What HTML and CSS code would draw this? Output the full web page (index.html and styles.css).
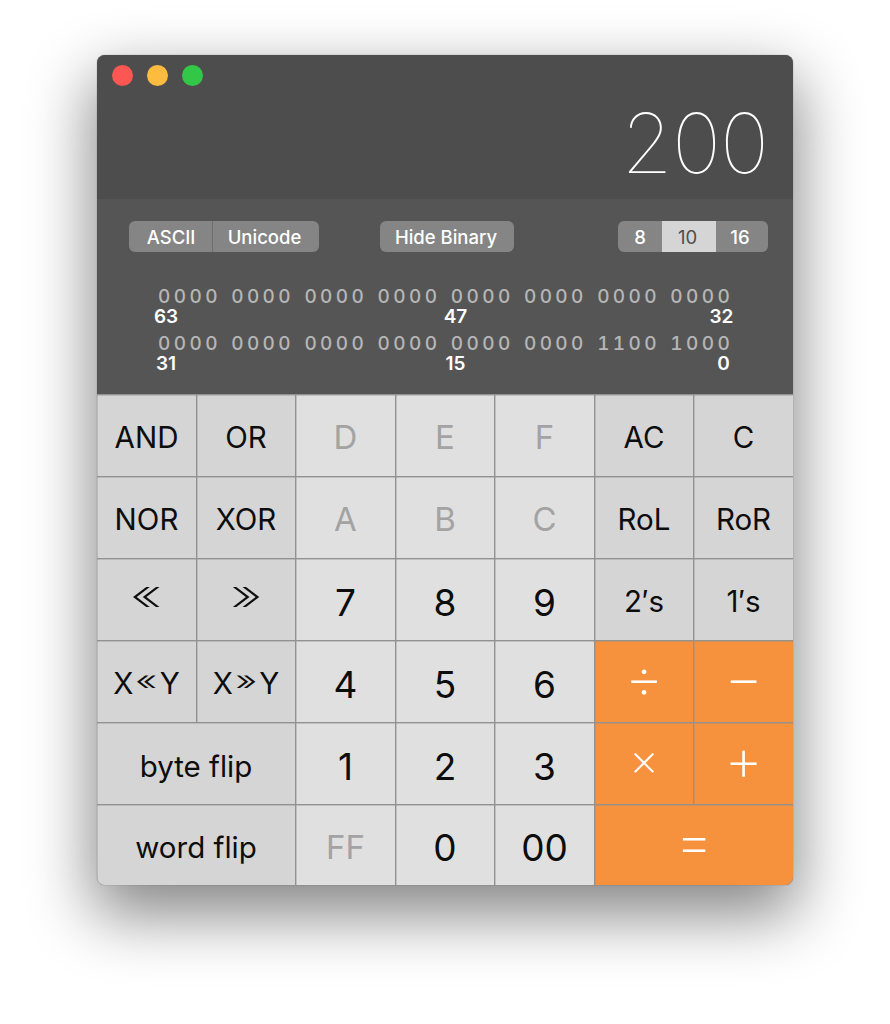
FILE: index.html
```html
<!DOCTYPE html>
<html lang="en">
<head>
<meta charset="utf-8">
<title>Calculator</title>
<link rel="stylesheet" href="styles.css">
</head>
<body>
<main class="window">
  <header class="display">
    <div class="lights"><span class="light red"></span><span class="light yellow"></span><span class="light green"></span></div>
    <div class="value">200</div>
  </header>
  <section class="panel">
    <div class="toolbar">
      <div class="seg seg-enc"><span class="seg-item ascii">ASCII</span><span class="seg-item unicode">Unicode</span></div>
      <div class="seg seg-hide"><span class="seg-item hide">Hide Binary</span></div>
      <div class="seg seg-base"><span class="seg-item b8">8</span><span class="seg-item b10">10</span><span class="seg-item b16">16</span></div>
    </div>
    <div class="binary">
      <div class="bits"><span>0000</span><span>0000</span><span>0000</span><span>0000</span><span>0000</span><span>0000</span><span>0000</span><span>0000</span></div>
      <div class="marks"><span>63</span><span>47</span><span>32</span></div>
      <div class="bits"><span>0000</span><span>0000</span><span>0000</span><span>0000</span><span>0000</span><span>0000</span><span>1100</span><span>1000</span></div>
      <div class="marks"><span>31</span><span>15</span><span class="mark-zero">0</span></div>
    </div>
  </section>
  <section class="keys">
    <div class="key fn">AND</div><div class="key fn">OR</div><div class="key num off">D</div><div class="key num off">E</div><div class="key num off">F</div><div class="key fn">AC</div><div class="key fn">C</div>
    <div class="key fn">NOR</div><div class="key fn">XOR</div><div class="key num off">A</div><div class="key num off">B</div><div class="key num off">C</div><div class="key fn">RoL</div><div class="key fn">RoR</div>
    <div class="key fn shift"><span>«</span></div><div class="key fn shift"><span>»</span></div><div class="key num digit">7</div><div class="key num digit">8</div><div class="key num digit">9</div><div class="key fn">2′s</div><div class="key fn">1′s</div>
    <div class="key fn">X<span class="mini">«</span>Y</div><div class="key fn">X<span class="mini">»</span>Y</div><div class="key num digit">4</div><div class="key num digit">5</div><div class="key num digit">6</div><div class="key op">÷</div><div class="key op">−</div>
    <div class="key fn wide flip">byte flip</div><div class="key num digit">1</div><div class="key num digit">2</div><div class="key num digit">3</div><div class="key op times">×</div><div class="key op">+</div>
    <div class="key fn wide flip">word flip</div><div class="key num off">FF</div><div class="key num digit">0</div><div class="key num digit">00</div><div class="key op wide">=</div>
  </section>
</main>
</body>
</html>
```
FILE: styles.css
```css
* { box-sizing: border-box; }
html, body { margin: 0; background: #fff; }
body { padding: 55px 97px 0; height: 1024px; overflow: hidden; font-family: Inter, "Liberation Sans", sans-serif; }
.window { width: 696px; height: 830px; border-radius: 8px; overflow: hidden; display: flex; flex-direction: column; background: #929292; box-shadow: 0 26px 64px 4px rgba(0,0,0,.48), 0 0 1px rgba(0,0,0,.6); }
.display { height: 144px; background: #4d4d4d; padding: 10px 25px 0 15px; flex: none; }
.lights { display: flex; gap: 14px; }
.light { width: 21px; height: 21px; border-radius: 50%; }
.red { background: #fc5753; }
.yellow { background: #fdbc40; }
.green { background: #33c748; }
.value { font-size: 83px; font-weight: 100; color: #fff; text-align: right; line-height: 90px; margin-top: 12px; letter-spacing: -1px; }
.panel { height: 195px; background: #555; flex: none; padding-top: 22px; }
.toolbar { display: flex; padding-left: 32px; }
.seg { display: flex; height: 31px; border-radius: 6px; overflow: hidden; background: #858585; color: #fff; font-size: 18.5px; font-weight: 500; line-height: 33px; text-align: center; }
.seg-hide { margin-left: 61px; }
.seg-base { margin-left: 104px; }
.ascii { width: 84px; padding-left: 1px; border-right: 1px solid #6f6f6f; }
.unicode { width: 106px; padding-right: 3px; }
.hide { width: 134px; padding-right: 2px; }
.b8 { width: 44px; }
.b10 { width: 54px; padding-right: 3px; background: #d5d5d5; color: #4d4d4d; font-weight: 400; }
.b16 { width: 52px; padding-right: 4px; }
.binary { padding: 34px 0 0 59px; }
.bits { display: flex; height: 21px; color: #b6b6b6; font-size: 19px; line-height: 21px; letter-spacing: 3.4px; font-weight: 500; padding-left: 2px; font-variant-numeric: tabular-nums; }
.bits span { width: 73.2px; flex: none; white-space: nowrap; }
.marks { display: flex; height: 26px; color: #fff; font-size: 19px; font-weight: 600; line-height: 19px; margin-left: -5px; }
.marks span { width: 30px; text-align: center; }
.marks span:nth-child(2) { margin-left: 259.5px; }
.marks span:nth-child(3) { margin-left: 236px; }
.mark-zero { position: relative; left: 2px; }
.keys { flex: 1; display: grid; grid-template-columns: 99px 98px 99px 98px 99px 98px 99px; grid-template-rows: repeat(5, 81px) 80px; gap: 1px; padding-top: 1px; }
.key { display: flex; align-items: center; justify-content: center; font-size: 29.5px; color: #0d0d0d; padding-top: 2px; box-shadow: inset 1px 0 rgba(146,146,146,.4), inset 0 1px rgba(146,146,146,.4); }
.fn { background: #d5d5d5; }
.flip { padding-top: 4px; }
.num { background: #e0e0e0; }
.digit { font-size: 37px; padding-top: 5px; }
.off { color: #a3a3a3; font-size: 33px; padding-top: 3px; }
.op { background: #f6923e; color: #fff; font-size: 60px; font-weight: 200; padding: 0 0 10px; line-height: 1; }
.times { font-size: 46px; }
.wide { grid-column: span 2; }
.shift span { display: inline-block; font-size: 54px; font-weight: 200; line-height: 1; position: relative; top: -6px; transform: scale(1.25, .8); }
.mini { display: inline-block; font-size: 38px; font-weight: 300; line-height: 1; position: relative; top: -3px; margin: 0 3px; transform: scale(1.1, .72); }
```
